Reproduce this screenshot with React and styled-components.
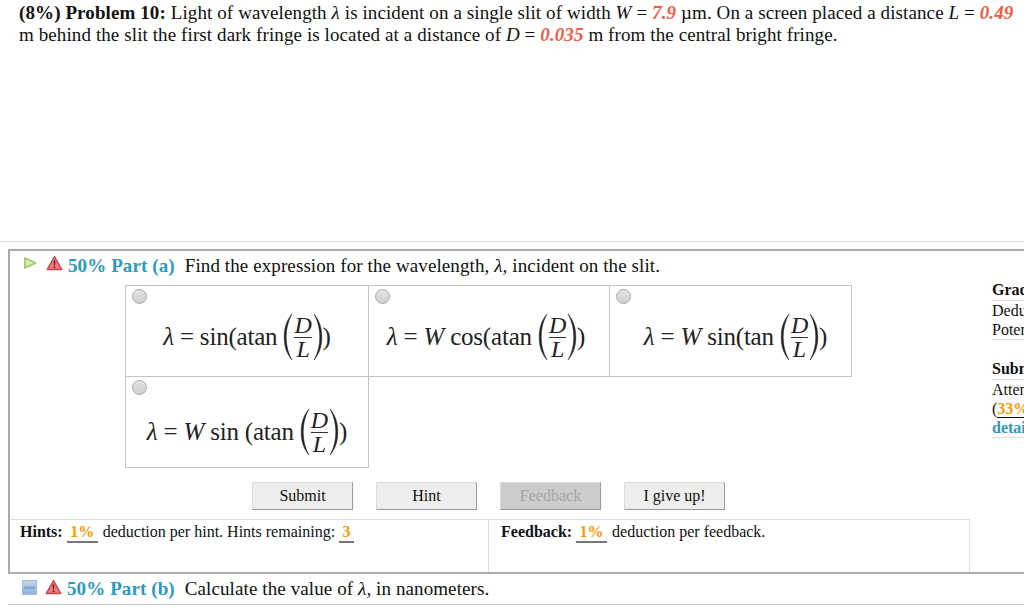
import React from "react";
import styled, { createGlobalStyle } from "styled-components";

const Global = createGlobalStyle`
  html, body { margin: 0; padding: 0; background: #fff; }
  body { font-family: "Liberation Serif", "Times New Roman", serif; color: #111; }
`;
const Page = styled.div`width: 1024px; height: 607px; overflow: hidden;`;
const Problem = styled.div`
  height: 242px; box-sizing: border-box; border-bottom: 1px solid #ddd;
  padding: 2px 0 0 19px; width: 1024px; font-size: 19px; line-height: 22px; letter-spacing: .1px;
  p { margin: 0; width: 1000px; }
`;
const Var = styled.span`color: #f55a45; font-weight: bold; font-style: italic;`;
const Panel = styled.section`
  margin: 7px 0 0 8px; width: 1040px; box-sizing: border-box;
  border: 2px solid #aaa; border-right: none; display: flex;
`;
const Main = styled.div`width: 960px; flex: none;`;
const PartHeader = styled.div`
  height: 33px; padding-bottom: 3px; display: flex; align-items: center; font-size: 19px; letter-spacing: .1px; box-sizing: border-box;
`;
const PartTitle = styled.b`color: #2a9bbf; margin: 0 10px 0 5px; white-space: nowrap;`;
const OptionTable = styled.table`
  border-collapse: collapse; margin: 1px 0 0 115px; table-layout: fixed; width: 726px;
  td { border: 1px solid #c4c4c4; padding: 3px 6px 0; height: 91px; box-sizing: border-box; vertical-align: top; }
`;
const Radio = styled.div`
  width: 13px; height: 13px; border-radius: 50%; border: 1px solid #aaa;
  background: linear-gradient(#e4e4e4, #cfcfcf);
`;
const Formula = styled.div`
  display: flex; justify-content: center; align-items: center; margin-top: ${p => p.$mt}px; height: 50px;
  transform: translateX(${p => p.$shift || 0}px);
  font-family: "Liberation Serif", serif; font-size: 25px; letter-spacing: -.2px; color: #222; white-space: pre;
`;
const Frac = styled.span`
  display: inline-flex; flex-direction: column; align-items: center; font-style: italic;
  font-size: 24px; line-height: 23px; margin: 0 1px;
  span:first-child { border-bottom: 1.5px solid #333; }
`;
const Buttons = styled.div`display: flex; gap: 23px; margin: 14px 0 9px 242px;`;
const Btn = styled.div`
  width: 101px; height: 28px; box-sizing: border-box; display: flex; align-items: center; justify-content: center;
  font-size: 16px; border: 1px solid #ddd; border-right-color: #999; border-bottom-color: #999;
  background: ${p => p.$off ? "#ccc" : "#eee"}; color: ${p => p.$off ? "#a6a6a6" : "#111"};
`;
const Notes = styled.div`
  display: grid; grid-template-columns: 478px 482px; height: 53px; border-top: 1px solid #ddd; box-sizing: border-box;
`;
const Note = styled.div`
  font-size: 16px; padding: 3px 0 0 10px; line-height: 18px; white-space: nowrap;
  & + & { border-left: 1px solid #ddd; border-right: 1px solid #ddd; padding-left: 12px; }
`;
const Val = styled.b`
  display: inline-block; color: #f90; border-bottom: 2px solid #777; padding: 0 3.5px; margin: 0 5px 0 0; height: 18px; line-height: 18px;
  box-sizing: content-box;
`;
const Aside = styled.aside`margin: 30px 0 0 22px; width: 170px; font-size: 16px; white-space: nowrap;`;
const AsideBlock = styled.div`
  margin-bottom: 20px;
  h4 { margin: 0; font-size: 16px; line-height: 17px; padding-bottom: 2px; border-bottom: 1px solid #ddd; }
`;
const AsideBody = styled.div`border-bottom: 1px solid #ddd; line-height: 19px;`;
const Pct = styled.span`border-bottom: 1px solid #111; b { color: #f90; }`;
const AsideLink = styled.b`color: #2a9bbf;`;
const PartB = styled.div`
  margin-left: 8px; height: 31px; border-bottom: 1px solid #ccc; box-sizing: border-box; display: flex; align-items: center; font-size: 19px; letter-spacing: .1px;
`;
const IconSlot = styled.span`display: inline-flex; margin-left: ${p => p.$ml}px; margin-bottom: ${p => p.$mb || 0}px;`;

const Warn = () => (
  <svg width="17" height="17" viewBox="0 0 17 17">
    <path d="M8.5 1.5 L15.8 14.5 H1.2 Z" fill="#ec7a7e" stroke="#c2474c" strokeWidth="1.4" strokeLinejoin="round" />
    <path d="M7.6 5.5h1.8l-.4 5h-1z M7.6 11.4h1.8v1.7h-1.8z" fill="#7a1a1e" />
  </svg>
);
const Play = () => (
  <svg width="14" height="14" viewBox="0 0 14 14">
    <path d="M2 2 L12.5 7 L2 12 Z" fill="#dcebb5" stroke="#a6c765" strokeWidth="1.8" strokeLinejoin="round" />
  </svg>
);
const Collapse = () => (
  <svg width="15" height="15" viewBox="0 0 15 15">
    <defs><linearGradient id="bl" x1="0" y1="0" x2="0" y2="1"><stop offset="0" stopColor="#c6d5e6" /><stop offset="1" stopColor="#8fb2dc" /></linearGradient></defs>
    <rect x=".5" y=".5" width="14" height="14" fill="url(#bl)" stroke="#a9bbd0" />
    <rect x="2" y="6.5" width="11" height="2.4" fill="#7ea4d2" />
  </svg>
);
const Paren = ({ right }) => (
  <svg width="10" height="48" viewBox="0 0 10 48" style={right ? { transform: "scaleX(-1)" } : undefined}>
    <path d="M9 1 C3 8 1.2 16 1.2 24 C1.2 32 3 40 9 47 C5 40 3.2 32 3.2 24 C3.2 16 5 8 9 1 Z" fill="#222" stroke="#222" strokeWidth=".5" />
  </svg>
);
const DL = () => (
  <>
    <Paren />
    <Frac><span>D</span><span>L</span></Frac>
    <Paren right />
    <span>)</span>
  </>
);
const options = [
  { pre: <><i>λ</i> = sin(atan </>, shift: 0 },
  { pre: <><i>λ</i> = <i>W</i> cos(atan </>, shift: -3 },
  { pre: <><i>λ</i> = <i>W</i> sin(tan </>, shift: 5 },
];

export default function App() {
  return (
    <Page>
      <Global />
      <Problem>
        <p><b>(8%) Problem 10:</b> Light of wavelength <i>λ</i> is incident on a single slit of width <i>W</i> = <Var>7.9</Var> µm. On a screen placed a distance <i>L</i> = <Var>0.49</Var> m behind the slit the first dark fringe is located at a distance of <i>D</i> = <Var>0.035</Var> m from the central bright fringe.</p>
      </Problem>
      <Panel>
        <Main>
          <PartHeader>
            <IconSlot $ml={13} $mb={6}><Play /></IconSlot>
            <IconSlot $ml={9} $mb={6}><Warn /></IconSlot>
            <PartTitle>50% Part (a)</PartTitle>
            <span>Find the expression for the wavelength, <i>λ</i>, incident on the slit.</span>
          </PartHeader>
          <OptionTable>
            <colgroup><col style={{ width: 243 }} /><col style={{ width: 241 }} /><col style={{ width: 242 }} /></colgroup>
            <tbody>
              <tr>
                {options.map((o, i) => (
                  <td key={i}><Radio /><Formula $mt={8} $shift={o.shift}>{o.pre}<DL /></Formula></td>
                ))}
              </tr>
              <tr>
                <td><Radio /><Formula $mt={12}><i>λ</i> = <i>W</i> sin (atan <DL /></Formula></td>
              </tr>
            </tbody>
          </OptionTable>
          <Buttons>
            <Btn>Submit</Btn>
            <Btn>Hint</Btn>
            <Btn $off>Feedback</Btn>
            <Btn>I give up!</Btn>
          </Buttons>
          <Notes>
            <Note><b>Hints:</b> <Val>1%</Val>deduction per hint. Hints remaining: <Val>3</Val></Note>
            <Note><b>Feedback:</b> <Val>1%</Val>deduction per feedback.</Note>
          </Notes>
        </Main>
        <Aside>
          <AsideBlock>
            <h4>Grade Summary</h4>
            <AsideBody>Deductions<br />Potential</AsideBody>
          </AsideBlock>
          <AsideBlock>
            <h4>Submissions</h4>
            <AsideBody>Attempts remaining:<br />(<Pct><b>33%</b> per attempt</Pct>)<br /><AsideLink>detailed view</AsideLink></AsideBody>
          </AsideBlock>
        </Aside>
      </Panel>
      <PartB>
        <IconSlot $ml={14} $mb={3}><Collapse /></IconSlot>
        <IconSlot $ml={8} $mb={3}><Warn /></IconSlot>
        <PartTitle>50% Part (b)</PartTitle>
        <span>Calculate the value of <i>λ</i>, in nanometers.</span>
      </PartB>
    </Page>
  );
}
